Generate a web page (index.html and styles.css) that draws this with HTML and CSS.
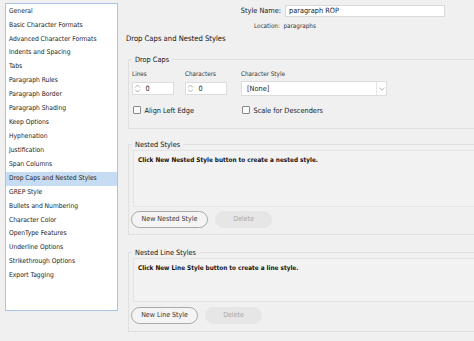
FILE: index.html
```html
<!DOCTYPE html>
<html>
<head>
<meta charset="utf-8">
<link rel="stylesheet" href="styles.css">
</head>
<body>
<div class="dialog">
  <nav class="sidebar">
    <ul class="nav-list">
      <li class="nav-item">General</li>
      <li class="nav-item">Basic Character Formats</li>
      <li class="nav-item">Advanced Character Formats</li>
      <li class="nav-item">Indents and Spacing</li>
      <li class="nav-item">Tabs</li>
      <li class="nav-item">Paragraph Rules</li>
      <li class="nav-item">Paragraph Border</li>
      <li class="nav-item">Paragraph Shading</li>
      <li class="nav-item">Keep Options</li>
      <li class="nav-item">Hyphenation</li>
      <li class="nav-item">Justification</li>
      <li class="nav-item">Span Columns</li>
      <li class="nav-item active">Drop Caps and Nested Styles</li>
      <li class="nav-item">GREP Style</li>
      <li class="nav-item">Bullets and Numbering</li>
      <li class="nav-item">Character Color</li>
      <li class="nav-item">OpenType Features</li>
      <li class="nav-item">Underline Options</li>
      <li class="nav-item">Strikethrough Options</li>
      <li class="nav-item">Export Tagging</li>
    </ul>
  </nav>
  <main class="content">
    <div class="name-row">
      <span class="name-label">Style Name:</span>
      <div class="name-input">paragraph ROP</div>
    </div>
    <div class="location">Location:&nbsp; paragraphs</div>
    <h2 class="page-title">Drop Caps and Nested Styles</h2>

    <fieldset class="group group-dropcaps">
      <legend class="group-title">Drop Caps</legend>
      <div class="fields">
        <div class="field field-lines">
          <div class="field-label">Lines</div>
          <div class="spinner">
            <svg class="spin-icon" width="7" height="11" viewBox="0 0 7 11"><path d="M1 4.5 L3.5 2 L6 4.5 M1 6.5 L3.5 9 L6 6.5" fill="none" stroke="#9a9a9a" stroke-width="0.8"/></svg>
            <span class="spin-value">0</span>
          </div>
        </div>
        <div class="field field-chars">
          <div class="field-label">Characters</div>
          <div class="spinner">
            <svg class="spin-icon" width="7" height="11" viewBox="0 0 7 11"><path d="M1 4.5 L3.5 2 L6 4.5 M1 6.5 L3.5 9 L6 6.5" fill="none" stroke="#9a9a9a" stroke-width="0.8"/></svg>
            <span class="spin-value">0</span>
          </div>
        </div>
        <div class="field field-style">
          <div class="field-label">Character Style</div>
          <div class="select">
            <span class="select-value">[None]</span>
            <span class="select-arrow"><svg width="6" height="4" viewBox="0 0 6 4"><path d="M0.5 0.8 L3 3.2 L5.5 0.8" fill="none" stroke="#a0a0a0" stroke-width="0.8"/></svg></span>
          </div>
        </div>
      </div>
      <div class="checks">
        <label class="check check-align"><span class="box"></span>Align Left Edge</label>
        <label class="check check-scale"><span class="box"></span>Scale for Descenders</label>
      </div>
    </fieldset>

    <fieldset class="group group-nested">
      <legend class="group-title">Nested Styles</legend>
      <div class="list list-nested">Click New Nested Style button to create a nested style.</div>
      <div class="buttons buttons-nested">
        <button class="btn btn-new btn-nested">New Nested Style</button>
        <button class="btn btn-disabled">Delete</button>
      </div>
    </fieldset>

    <fieldset class="group group-line">
      <legend class="group-title">Nested Line Styles</legend>
      <div class="list list-line">Click New Line Style button to create a line style.</div>
      <div class="buttons buttons-line">
        <button class="btn btn-new btn-line">New Line Style</button>
        <button class="btn btn-disabled">Delete</button>
      </div>
    </fieldset>
  </main>
</div>
</body>
</html>
```

FILE: styles.css
```css
* { box-sizing: border-box; }
html, body {
  margin: 0;
  padding: 0;
  background: #f0f0f0;
  width: 474px;
  height: 341px;
  overflow: hidden;
}
body {
  font-family: "DejaVu Sans", sans-serif;
  font-stretch: condensed;
  color: #1a1a1a;
  font-size: 6.7px;
}
.dialog {
  display: flex;
  align-items: flex-start;
  padding: 3px 0 0 5px;
}
.sidebar {
  width: 113px;
  height: 308px;
  background: #ffffff;
  border: 1px solid #a9c3e0;
  flex-shrink: 0;
}
.nav-list {
  list-style: none;
  margin: 0;
  padding: 0.7px 0 0 0;
}
.nav-item {
  height: 13.93px;
  line-height: 13.93px;
  padding-left: 3px;
  white-space: nowrap;
  color: #222;
}
.nav-item.active {
  background: #c6dcf3;
}
.content {
  flex: 1;
  padding-left: 8px;
  min-width: 0;
}
.name-row {
  display: flex;
  align-items: center;
  justify-content: flex-end;
  gap: 4px;
  padding-right: 29px;
  height: 13px;
  margin-top: 1px;
}
.name-label {
  font-size: 7.3px;
}
.name-input {
  width: 160px;
  height: 12px;
  background: #fff;
  border: 1px solid #dadada;
  font-size: 7.3px;
  line-height: 10px;
  padding-left: 3px;
}
.location {
  margin-top: 5px;
  padding-left: 128px;
  font-size: 6.3px;
  color: #333;
  height: 8px;
  line-height: 8px;
}
.page-title {
  margin: 0;
  font-weight: normal;
  font-size: 7.6px;
  height: 14px;
  line-height: 14px;
  margin-top: 2px;
  color: #111;
}
.group {
  margin: 0 0 0 2px;
  padding: 0 0 0 3px;
  border: 1px solid #e0e0e0;
  border-right: 0;
  min-width: 0;
}
.group-title {
  font-size: 7.3px;
  line-height: 9px;
  padding: 0 3px;
  margin: 0;
  color: #111;
}
.group-dropcaps {
  margin-top: 9px;
  padding-bottom: 13px;
}
.fields {
  display: flex;
  padding-top: 6px;
}
.field-label {
  font-size: 6.3px;
  color: #333;
  line-height: 8px;
  margin-bottom: 4px;
}
.field-lines { width: 53px; }
.field-chars { width: 56px; }
.spinner {
  width: 42px;
  height: 13px;
  background: #fff;
  border: 1px solid #dcdcdc;
  display: flex;
  align-items: center;
}
.spin-icon { margin-left: 0.5px; }
.spin-value {
  font-size: 7.3px;
  margin-left: 5px;
}
.select {
  width: 146px;
  height: 15px;
  background: #fff;
  border: 1px solid #dcdcdc;
  display: flex;
  align-items: center;
  margin-top: -1px;
}
.select-value {
  flex: 1;
  font-size: 7.3px;
  padding-left: 5px;
}
.select-arrow {
  width: 10px;
  height: 100%;
  border-left: 1px solid #e6e6e6;
  display: flex;
  align-items: center;
  justify-content: center;
}
.checks {
  display: flex;
  margin-top: 9.5px;
  padding-left: 1px;
  height: 9px;
}
.check {
  display: flex;
  align-items: center;
  font-size: 7.3px;
  gap: 4px;
}
.check-align { width: 109px; }
.box {
  width: 7.5px;
  height: 7.5px;
  border: 1px solid #8a8a8a;
  background: #fafafa;
  border-radius: 1px;
}
.group-nested {
  margin-top: 11.3px;
  padding-bottom: 6px;
}
.group-line {
  margin-top: 13.5px;
  padding-bottom: 7px;
}
.list {
  margin-left: 1px;
  border-top: 1px solid #e4e4e4;
  border-bottom: 1px solid #e4e4e4;
  border-left: 1px solid #e4e4e4;
  background: #f2f2f2;
  font-weight: bold;
  font-size: 6.4px;
  padding: 5px 0 0 4px;
  white-space: nowrap;
  overflow: hidden;
  color: #111;
}
.list-nested { height: 57px; margin-top: 1px; }
.list-line { height: 44px; margin-top: 0.5px; }
.buttons {
  display: flex;
  gap: 7px;
  margin-left: -1px;
}
.buttons-nested { margin-top: 4px; }
.buttons-line { margin-top: 5px; }
.btn {
  font-family: inherit;
  font-stretch: condensed;
  font-size: 7px;
  height: 17px;
  border-radius: 9px;
  padding: 0;
}
.btn-new {
  background: #f4f4f4;
  border: 1px solid #a8a8a8;
  color: #333;
}
.btn-nested { width: 77px; }
.btn-line { width: 67px; }
.btn-disabled {
  width: 57px;
  background: #e6e6e6;
  border: 1px solid #e6e6e6;
  color: #a8a8a8;
}
```
